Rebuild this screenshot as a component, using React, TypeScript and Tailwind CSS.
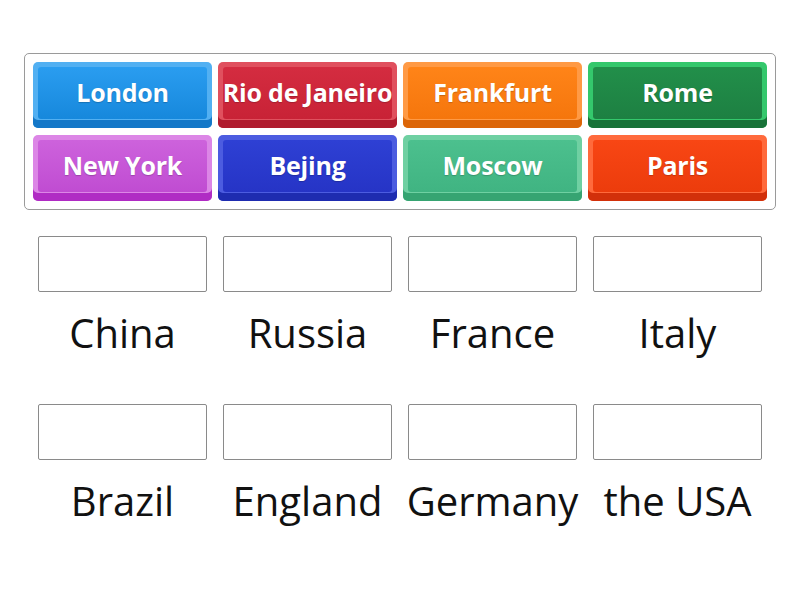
const tiles = [
  { label: 'London', edge: 'bg-[#52b0f2]', face: 'from-[#2a9df0] to-[#1688dc]', base: 'shadow-[inset_0_-8px_0_#1478c8]' },
  { label: 'Rio de Janeiro', edge: 'bg-[#e0505e]', face: 'from-[#d42c40] to-[#c82236]', base: 'shadow-[inset_0_-8px_0_#b01c2e]' },
  { label: 'Frankfurt', edge: 'bg-[#ff9a45]', face: 'from-[#ff8418] to-[#f5760c]', base: 'shadow-[inset_0_-8px_0_#dc6608]' },
  { label: 'Rome', edge: 'bg-[#34c86c]', face: 'from-[#228f4a] to-[#1d8042]', base: 'shadow-[inset_0_-8px_0_#187238]' },
  { label: 'New York', edge: 'bg-[#dc86e6]', face: 'from-[#cd62dc] to-[#c04cd2]', base: 'shadow-[inset_0_-8px_0_#b02cc4]' },
  { label: 'Bejing', edge: 'bg-[#4c5ce0]', face: 'from-[#2e40d4] to-[#2634c6]', base: 'shadow-[inset_0_-8px_0_#1e2cb0]' },
  { label: 'Moscow', edge: 'bg-[#6fd0a2]', face: 'from-[#4cc08e] to-[#40b482]', base: 'shadow-[inset_0_-8px_0_#36a472]' },
  { label: 'Paris', edge: 'bg-[#ff6a3c]', face: 'from-[#f84614] to-[#ec3c0c]', base: 'shadow-[inset_0_-8px_0_#d2300a]' },
];

const rows = [
  ['China', 'Russia', 'France', 'Italy'],
  ['Brazil', 'England', 'Germany', 'the USA'],
];

export default function App() {
  return (
    <div className="w-[800px] h-[600px] bg-white font-['Open_Sans',sans-serif] overflow-hidden">
      {/* Answer tiles */}
      <div className="mx-[24px] mt-[53px] w-[752px] h-[157px] border border-[#9a9a9a] rounded-[5px] px-[8px] pt-[8px]">
        <div className="grid grid-cols-[repeat(4,179px)] gap-x-[6px] gap-y-[7px]">
          {tiles.map((t) => (
            <div
              key={t.label}
              className={`h-[66px] rounded-[5px] px-[5px] pt-[5px] pb-[9px] ${t.edge} ${t.base}`}
            >
              <div
                className={`h-full rounded-[3px] bg-gradient-to-b ${t.face} flex items-center justify-center text-white font-bold text-[25px] tracking-[-0.2px] whitespace-nowrap [text-shadow:0_1px_1px_rgba(0,0,0,0.2)]`}
              >
                {t.label}
              </div>
            </div>
          ))}
        </div>
      </div>

      {/* Drop targets */}
      <div className="mx-[30px] mt-[26px] flex flex-col gap-[47px]">
        {rows.map((row, i) => (
          <div key={i} className="grid grid-cols-[repeat(4,185px)]">
            {row.map((country) => (
              <div key={country} className="flex flex-col items-center">
                <div className="w-[169px] h-[56px] border border-[#8a8a8a] rounded-[2px] bg-white" />
                <div className="mt-[17px] text-[40px] leading-[48px] text-[#111] whitespace-nowrap">
                  {country}
                </div>
              </div>
            ))}
          </div>
        ))}
      </div>
    </div>
  );
}
